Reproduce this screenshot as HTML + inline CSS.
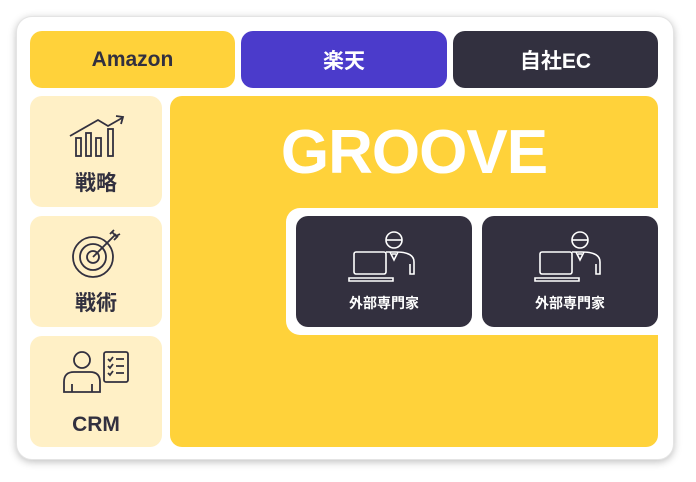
<!DOCTYPE html>
<html><head><meta charset="utf-8"><style>
*{margin:0;padding:0;box-sizing:border-box}
body{width:696px;height:482px;background:#fff;position:relative;overflow:hidden;font-family:"Liberation Sans","Noto Sans CJK JP",sans-serif}
.card{position:absolute;left:16px;top:16px;width:658px;height:444px;border-radius:16px;background:#fff;box-shadow:0 2px 8px rgba(0,0,0,.25);border:1px solid #e4e4e4}
.a{position:absolute}
.tab{position:absolute;top:31px;height:57px;border-radius:12px;display:flex;align-items:center;justify-content:center;font-weight:bold;font-size:21px}
.side{position:absolute;left:30px;width:132px;height:111px;border-radius:12px;background:#FFF0C6;color:#32303F}
.side .t{position:absolute;left:0;right:0;bottom:10px;text-align:center;font-weight:bold;font-size:21px}
.dk{position:absolute;top:216px;height:111px;width:176px;border-radius:12px;background:#33303F;color:#fff}
.dk .t{position:absolute;left:0;right:0;top:77px;text-align:center;font-weight:bold;font-size:14px}
</style></head><body>
<div class="card"></div>
<div class="tab" style="left:30px;width:205px;background:#FFD23A;color:#32303F">Amazon</div>
<div class="tab" style="left:241px;width:206px;background:#4B3BCB;color:#fff">楽天</div>
<div class="tab" style="left:453px;width:205px;background:#32303F;color:#fff">自社EC</div>

<div class="side" style="top:96px">
<svg class="a" style="left:36px;top:10px" width="60" height="52" fill="none" stroke="#32303F" stroke-width="1.8">
<path d="M4 30 L32 14 L42 20 L56 12"/><path d="M50 10 L57 11 L55 18"/>
<rect x="10" y="32" width="5" height="18"/><rect x="20" y="27" width="5" height="23"/><rect x="30" y="32" width="5" height="18"/><rect x="42" y="23" width="5" height="27"/>
</svg>
<div class="t">戦略</div></div>
<div class="side" style="top:216px">
<svg class="a" style="left:38px;top:10px" width="56" height="56" fill="none" stroke="#32303F" stroke-width="1.8">
<circle cx="25" cy="31" r="20"/><circle cx="25" cy="31" r="13"/><circle cx="25" cy="31" r="6"/>
<path d="M25 31 L48 8"/><path d="M42 8 L46 4 M46 14 L50 10 M44 6 L48 10 L52 8"/>
</svg>
<div class="t">戦術</div></div>
<div class="side" style="top:336px">
<svg class="a" style="left:32px;top:14px" width="70" height="46" fill="none" stroke="#32303F" stroke-width="1.8">
<circle cx="20" cy="10" r="8"/><path d="M2 42 V32 Q2 22 12 22 H28 Q38 22 38 32 V42 Z"/><path d="M10 34 V42 M30 34 V42"/>
<rect x="42" y="2" width="24" height="30" rx="2"/><path d="M46 9 l2 2 3-4 M46 16 l2 2 3-4 M46 23 l2 2 3-4 M54 9 H62 M54 16 H62 M54 23 H62"/>
</svg>
<div class="t">CRM</div></div>

<div class="a" style="left:170px;top:96px;width:488px;height:351px;background:#FFD23A;border-radius:12px"></div>
<div class="a" style="left:170px;top:118px;width:488px;text-align:center;font-weight:bold;font-size:62px;color:#fff;letter-spacing:-1px;line-height:70px">GROOVE</div>
<div class="a" style="left:286px;top:208px;width:372px;height:127px;background:#fff;border-radius:14px 0 0 14px"></div>

<div class="dk" style="left:296px">
<svg class="a" style="left:52px;top:14px" width="76" height="54" fill="none" stroke="#fff" stroke-width="1.6">
<circle cx="46" cy="10" r="8"/><path d="M38 10 H54"/>
<rect x="6" y="22" width="32" height="22" rx="2"/><path d="M1 48 H45 V51 H1 Z"/>
<path d="M38 22 H48 Q66 22 66 32 V44 H62 V34"/><path d="M42 22 L46 30 L50 22 M44 24 H48"/>
</svg>
<div class="t">外部専門家</div></div>
<div class="dk" style="left:482px">
<svg class="a" style="left:52px;top:14px" width="76" height="54" fill="none" stroke="#fff" stroke-width="1.6">
<circle cx="46" cy="10" r="8"/><path d="M38 10 H54"/>
<rect x="6" y="22" width="32" height="22" rx="2"/><path d="M1 48 H45 V51 H1 Z"/>
<path d="M38 22 H48 Q66 22 66 32 V44 H62 V34"/><path d="M42 22 L46 30 L50 22 M44 24 H48"/>
</svg>
<div class="t">外部専門家</div></div>
</body></html>
